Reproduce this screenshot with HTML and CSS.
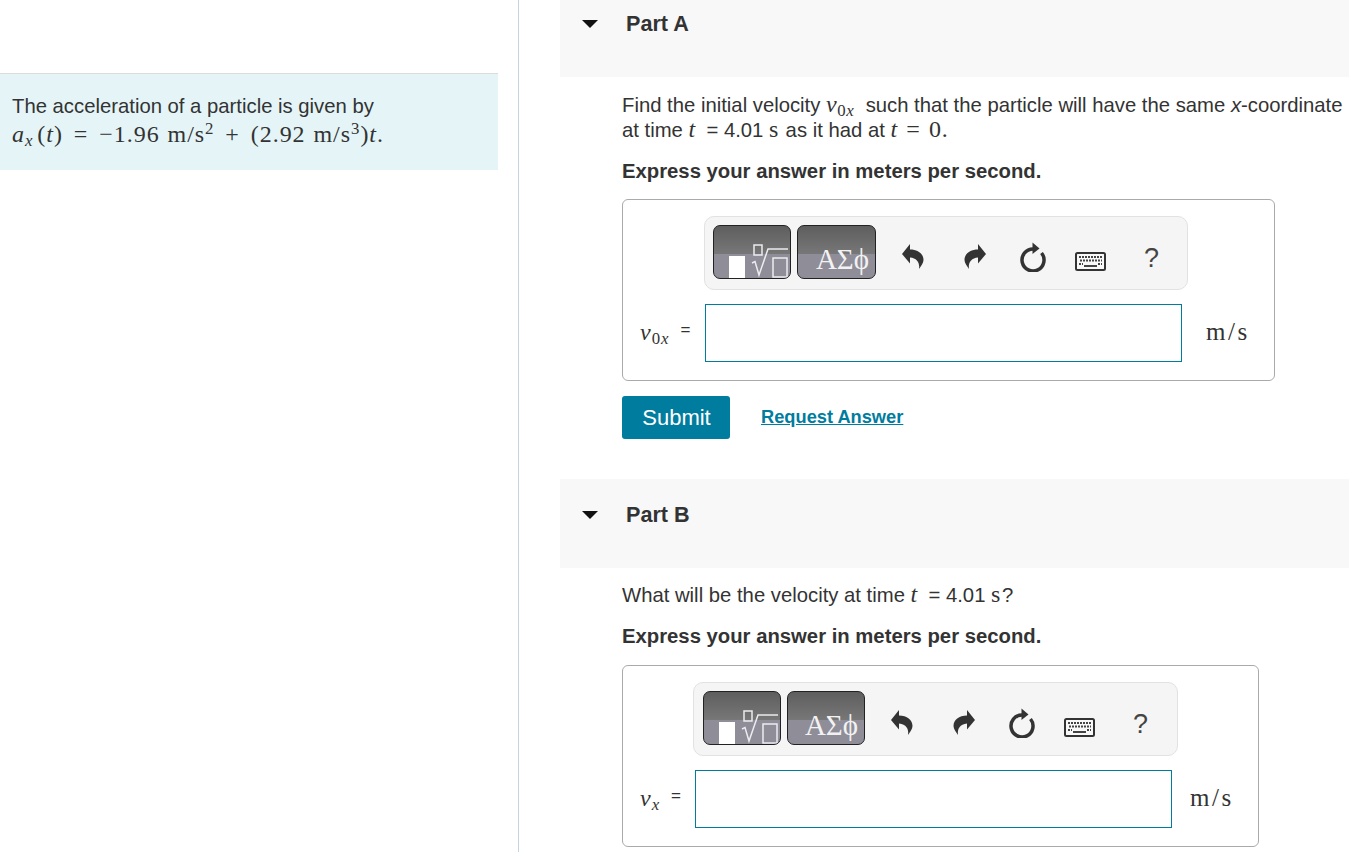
FILE: index.html
```html
<!DOCTYPE html>
<html lang="en">
<head>
  <meta charset="UTF-8" />
  <title>Particle acceleration</title>
  <meta name="viewport" content="width=device-width, initial-scale=1.0" />
  <link rel="stylesheet" href="styles.css">
</head>
<body>
  <svg class="defs" width="0" height="0">
    <symbol id="arrow" viewBox="0 0 22 26">
      <path d="M0 11 L8 1 V6.500 C16 6.500 21.500 11 21.500 17 C21.500 20 19 23 17 26 C18 20 15 15 8 14.500 V20.500 Z" />
    </symbol>
  </svg>

  <div class="page">
    <aside class="intro">
      <div class="intro-box">
        <p>The acceleration of a particle is given by</p>
        <p class="math intro-math"><i>a<sub>x</sub></i><span class="paren">(</span><i>t</i>) <span class="op">=</span> −1.96 m/s<sup>2</sup> <span class="op">+</span> (2.92 m/s<sup>3</sup>)<i>t</i>.</p>
      </div>
    </aside>

    <main class="parts">
      <section class="part part-a">
        <div class="part-head">
          <span class="caret"></span>
          <h2>Part A</h2>
        </div>
        <div class="part-body">
          <p class="question">Find the initial velocity <span class="math"><i>v</i><sub>0<i>x</i></sub></span>&nbsp; such that the particle will have the same <i>x</i>-coordinate<br>at time <i class="math t">t</i> = 4.01 <span class="math s">s</span> as it had at <span class="math"><i>t</i> = 0.</span></p>
          <p class="instruction">Express your answer in meters per second.</p>

          <div class="answer">
            <div class="toolbar">
              <div class="tool-btn">
                <svg width="78" height="54" viewBox="0 0 78 54">
                  <rect x="16" y="31" width="16" height="22" fill="#fff" />
                  <g fill="none" stroke="#ecebf0" stroke-width="1.500">
                    <rect x="41" y="20" width="8" height="10" />
                    <path d="M39 38 L42 36.500 L46 50 L55 24 H75" />
                    <rect x="60" y="33" width="14" height="19" />
                  </g>
                </svg>
              </div>
              <div class="tool-btn greek">ΑΣϕ</div>
              <svg class="ic undo" width="22" height="26"><use href="#arrow" /></svg>
              <svg class="ic redo" width="22" height="26"><use href="#arrow" /></svg>
              <svg class="ic reset" width="28" height="30" viewBox="0 0 28 30">
                <path d="M14 7 A11 11 0 1 0 22.500 11" fill="none" stroke="#333" stroke-width="3.500" />
                <path d="M13.500 0.500 L20.500 6.500 L13.500 12 Z" fill="#333" />
              </svg>
              <svg class="ic keys" width="31" height="19" viewBox="0 0 31 19">
                <rect x="1" y="1" width="29" height="17" rx="1.500" fill="#f8f8f8" stroke="#333" stroke-width="2" />
                <g stroke="#444" stroke-width="2" stroke-dasharray="2 1">
                  <path d="M4 5 H27" />
                  <path d="M5 8.500 H27" />
                  <path d="M4 12 H8" />
                  <path d="M23 12 H27" />
                </g>
                <path d="M9 14 H22" stroke="#444" stroke-width="2" />
              </svg>
              <span class="help">?</span>
            </div>
            <div class="answer-row">
              <label class="math var"><i>v</i><sub>0<i>x</i></sub><span class="eq">=</span></label>
              <div class="field"></div>
              <span class="math unit">m/s</span>
            </div>
          </div>

          <div class="actions">
            <button class="submit">Submit</button>
            <a class="request" href="#">Request Answer</a>
          </div>
        </div>
      </section>

      <section class="part part-b">
        <div class="part-head">
          <span class="caret"></span>
          <h2>Part B</h2>
        </div>
        <div class="part-body">
          <p class="question">What will be the velocity at time <i class="math t">t</i> = 4.01 <span class="math s">s</span>?</p>
          <p class="instruction">Express your answer in meters per second.</p>

          <div class="answer">
            <div class="toolbar">
              <div class="tool-btn">
                <svg width="78" height="54" viewBox="0 0 78 54">
                  <rect x="16" y="31" width="16" height="22" fill="#fff" />
                  <g fill="none" stroke="#ecebf0" stroke-width="1.500">
                    <rect x="41" y="20" width="8" height="10" />
                    <path d="M39 38 L42 36.500 L46 50 L55 24 H75" />
                    <rect x="60" y="33" width="14" height="19" />
                  </g>
                </svg>
              </div>
              <div class="tool-btn greek">ΑΣϕ</div>
              <svg class="ic undo" width="22" height="26"><use href="#arrow" /></svg>
              <svg class="ic redo" width="22" height="26"><use href="#arrow" /></svg>
              <svg class="ic reset" width="28" height="30" viewBox="0 0 28 30">
                <path d="M14 7 A11 11 0 1 0 22.500 11" fill="none" stroke="#333" stroke-width="3.500" />
                <path d="M13.500 0.500 L20.500 6.500 L13.500 12 Z" fill="#333" />
              </svg>
              <svg class="ic keys" width="31" height="19" viewBox="0 0 31 19">
                <rect x="1" y="1" width="29" height="17" rx="1.500" fill="#f8f8f8" stroke="#333" stroke-width="2" />
                <g stroke="#444" stroke-width="2" stroke-dasharray="2 1">
                  <path d="M4 5 H27" />
                  <path d="M5 8.500 H27" />
                  <path d="M4 12 H8" />
                  <path d="M23 12 H27" />
                </g>
                <path d="M9 14 H22" stroke="#444" stroke-width="2" />
              </svg>
              <span class="help">?</span>
            </div>
            <div class="answer-row">
              <label class="math var"><i>v<sub>x</sub></i><span class="eq">=</span></label>
              <div class="field"></div>
              <span class="math unit">m/s</span>
            </div>
          </div>
        </div>
      </section>
    </main>
  </div>
</body>
</html>
```

FILE: styles.css
```css
:root {
  --text: #333;
  --teal: #007c9f;
}

html, body {
  height: 100%;
}

body {
  margin: 0;
  overflow: hidden;
  background: #fff;
  color: var(--text);
  font-family: "Liberation Sans", Arial, sans-serif;
  font-size: 20.3px;
  line-height: 25px;
}

p {
  margin: 0;
}

.defs {
  position: absolute;
}

.page {
  display: flex;
  height: 852px;
}

/* left column */
.intro {
  width: 498px;
  margin-right: 20px;
  padding-top: 73px;
}

.intro-box {
  height: 97px;
  padding: 20px 12px 0;
  box-sizing: border-box;
  background: #e5f5f7;
  border-top: 1px solid #dcdcdc;
}

.intro-box p {
  height: 28px;
  line-height: 25px;
}

.math {
  font-family: "Liberation Serif", "Times New Roman", serif;
}

.intro-math {
  font-size: 24px;
  letter-spacing: 0.95px;
  word-spacing: 1px;
}

.op {
  margin: 0 3px;
}

.math sub, .math sup {
  font-size: 0.7em;
  line-height: 0;
}

.math sub {
  vertical-align: -0.25em;
}

.math sup {
  vertical-align: 0.45em;
}

.paren {
  margin-left: 4px;
}

/* right column */
.parts {
  width: 789px;
  margin-left: 0;
  padding-left: 41px;
  border-left: 1px solid #c6d4de;
}

.part-head {
  display: flex;
  align-items: center;
  height: 25px;
  padding: 23px 0 41px 22px;
  background: #f8f8f8;
}

.part-a .part-head {
  padding-top: 11px;
}

.caret {
  width: 0;
  height: 0;
  border-style: solid;
  border-width: 8px 8px 0;
  border-color: #111 transparent transparent;
}

h2 {
  margin: 0 0 0 28px;
  font-size: 21.6px;
  line-height: 25px;
}

.part-body {
  padding: 16px 0 0 62px;
}

.part-b .part-body {
  padding-top: 15px;
}

.question .math {
  font-size: 24px;
  line-height: 0;
  letter-spacing: 0.6px;
  word-spacing: 2px;
}

.question .t {
  margin: 0 5px 0 0;
}

.question .s {
  margin-right: 1px;
}

.instruction {
  margin-top: 16px;
  font-weight: bold;
}

/* answer box */
.answer {
  box-sizing: border-box;
  width: 653px;
  height: 182px;
  margin-top: 15px;
  padding-top: 16px;
  border: 1px solid #aaa;
  border-radius: 6px;
}

.part-b .answer {
  width: 637px;
  margin-top: 16px;
}

.toolbar {
  display: flex;
  align-items: flex-start;
  box-sizing: border-box;
  width: 484px;
  height: 74px;
  margin-left: 81px;
  padding: 8px 0 0 8px;
  background: #f5f5f5;
  border: 1px solid #e2e2e2;
  border-radius: 10px;
}

.part-b .toolbar {
  width: 485px;
  margin-left: 70px;
  padding-left: 9px;
}

.tool-btn {
  display: flex;
  align-items: flex-end;
  justify-content: flex-end;
  box-sizing: border-box;
  width: 78px;
  height: 54px;
  overflow: hidden;
  background: linear-gradient(#5e5e5e, #777 53%, #8f8d98 53%, #8f8d98);
  border: 1px solid #222;
  border-radius: 7px;
}

.tool-btn svg {
  flex: none;
  margin: -1px;
}

.greek {
  width: 79px;
  margin-left: 6px;
  padding-right: 6px;
  color: #f2f2f2;
  font-family: "Liberation Serif", serif;
  font-size: 29px;
  line-height: 37px;
}

.part-b .greek {
  width: 78px;
}

.ic {
  flex: none;
  fill: #333;
}

.undo {
  margin: 18px 0 0 26px;
}

.redo {
  margin: 18px 0 0 40px;
  transform: scaleX(-1);
}

.reset {
  margin: 17px 0 0 33px;
}

.keys {
  margin: 27px 0 0 28px;
}

.help {
  margin: 19px 0 0 38px;
  color: #444;
  font-size: 27px;
  line-height: 28px;
}

.answer-row {
  display: flex;
  align-items: flex-start;
  margin-top: 14px;
  padding-left: 17px;
}

.var {
  width: 65px;
  margin-top: 13px;
  font-size: 24px;
  letter-spacing: 1px;
}

.part-b .var {
  width: 55px;
}

.eq {
  margin-left: 11px;
  font-family: "Liberation Sans", sans-serif;
  font-size: 17px;
  vertical-align: 5px;
}

.field {
  box-sizing: border-box;
  width: 477px;
  height: 58px;
  background: #fff;
  border: 1px solid var(--teal);
}

.unit {
  margin: 15px 0 0 24px;
  font-size: 25px;
  letter-spacing: 2.500px;
}

.part-b .unit {
  margin-left: 18px;
}

/* submit row */
.actions {
  display: flex;
  align-items: center;
  margin-top: 15px;
}

.submit {
  width: 108px;
  height: 43px;
  padding: 0 0 0 1px;
  color: #fff;
  background: var(--teal);
  border: 0;
  border-radius: 3px;
  font-family: inherit;
  font-size: 22px;
}

.request {
  margin: 0 0 2px 31px;
  color: var(--teal);
  font-size: 18.25px;
  font-weight: bold;
}

.part-b {
  margin-top: 40px;
}
```
